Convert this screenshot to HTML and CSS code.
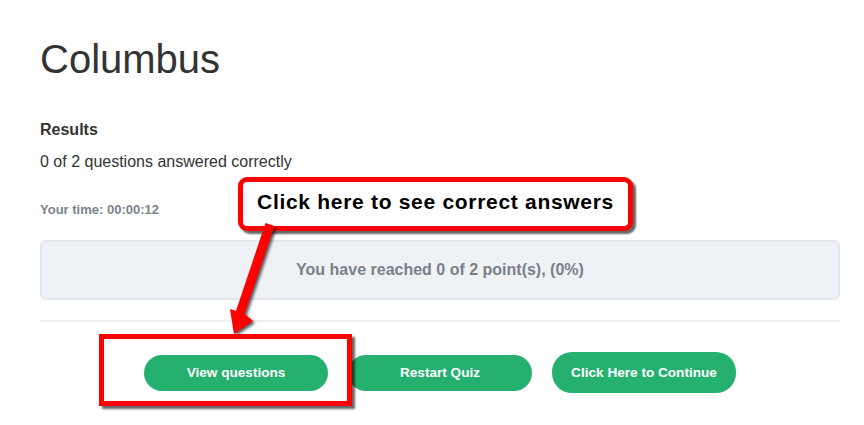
FILE: index.html
```html
<!DOCTYPE html>
<html>
<head>
<meta charset="utf-8">
<link rel="stylesheet" href="styles.css">
</head>
<body>
<div class="page">
  <h1 class="title">Columbus</h1>
  <div class="results-label">Results</div>
  <div class="score-line">0 of 2 questions answered correctly</div>
  <div class="time">Your time: 00:00:12</div>
  <div class="points-box">You have reached 0 of 2 point(s), (0%)</div>
  <div class="divider"></div>
  <div class="actions">
    <button class="btn">View questions</button>
    <button class="btn">Restart Quiz</button>
    <button class="btn btn-tall">Click Here to Continue</button>
  </div>

  <div class="callout">Click here to see correct answers</div>
  <svg class="arrow" width="864" height="425" viewBox="0 0 864 425">
    <polygon points="274.5,226 265.5,223 236,311 230,309 234,334 253,321 244.5,314" fill="#ff0000"/>
  </svg>
  <div class="highlight-box"></div>
</div>
</body>
</html>
```
FILE: styles.css
```css
html, body {
  margin: 0;
  padding: 0;
  background: #ffffff;
}
body {
  font-family: "Liberation Sans", Arial, sans-serif;
  color: #333333;
}
.page {
  position: relative;
  width: 800px;
  padding: 35px 0 0 40px;
  height: 390px;
}
.title {
  margin: 0;
  font-size: 40px;
  line-height: 48px;
  font-weight: normal;
  color: #333333;
}
.results-label {
  margin-top: 37px;
  font-size: 16px;
  line-height: 20px;
  font-weight: bold;
}
.score-line {
  margin-top: 12px;
  font-size: 16px;
  line-height: 20px;
}
.time {
  margin-top: 30px;
  font-size: 13px;
  line-height: 16px;
  font-weight: bold;
  color: #7b848d;
}
.points-box {
  margin-top: 22px;
  height: 56px;
  border: 2px solid #e3e7ec;
  border-radius: 6px;
  background: #eff2f5;
  display: flex;
  align-items: center;
  justify-content: center;
  font-size: 16px;
  font-weight: bold;
  color: #78818a;
}
.divider {
  margin-top: 20px;
  height: 2px;
  background: #eef0f3;
}
.actions {
  margin-top: 30px;
  display: flex;
  align-items: center;
  justify-content: center;
  gap: 20px;
}
.btn {
  width: 184px;
  height: 36px;
  border: none;
  border-radius: 20px;
  background: #26b070;
  color: #ffffff;
  font-family: "Liberation Sans", Arial, sans-serif;
  font-size: 13.6px;
  font-weight: bold;
  padding: 0;
}
.btn-tall {
  height: 41px;
}
.callout {
  position: absolute;
  left: 238px;
  top: 177px;
  width: 385px;
  height: 40px;
  padding-bottom: 4px;
  border: 5px solid #ff0000;
  border-radius: 9px;
  background: #ffffff;
  box-shadow: 3px 3px 2px rgba(0, 0, 0, 0.6);
  display: flex;
  align-items: center;
  justify-content: center;
  font-size: 21px;
  font-weight: bold;
  letter-spacing: 0.7px;
  color: #000000;
}
.arrow {
  position: absolute;
  left: 0;
  top: 0;
  pointer-events: none;
  filter: drop-shadow(2px 2px 1.5px rgba(0, 0, 0, 0.65));
}
.highlight-box {
  position: absolute;
  left: 99px;
  top: 334px;
  width: 243px;
  height: 62px;
  border: 5px solid #ff0000;
  box-shadow: 3px 3px 2px rgba(0, 0, 0, 0.6);
}
```
